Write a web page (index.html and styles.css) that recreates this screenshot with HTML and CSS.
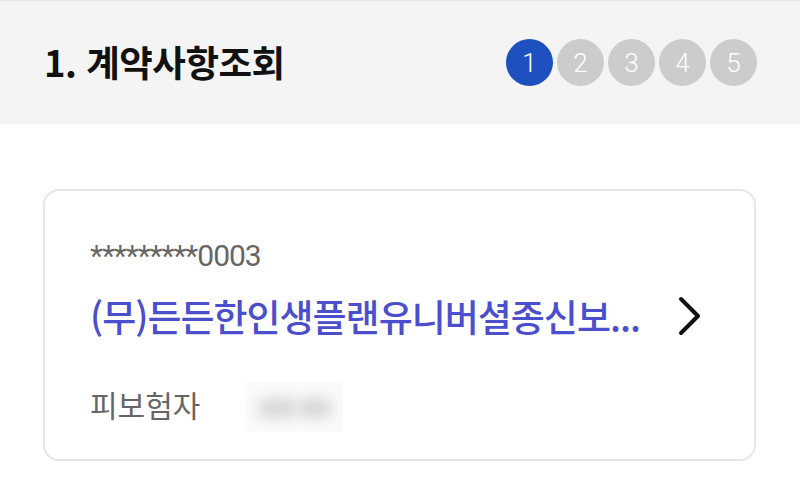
FILE: index.html
```html
<!DOCTYPE html>
<html lang="ko">
<head>
<meta charset="utf-8">
<link rel="stylesheet" href="styles.css">
</head>
<body>
<header class="header">
  <h1 class="title">1. 계약사항조회</h1>
  <ol class="steps">
    <li class="step active">1</li>
    <li class="step">2</li>
    <li class="step">3</li>
    <li class="step">4</li>
    <li class="step">5</li>
  </ol>
</header>
<main class="content">
  <div class="card">
    <div class="card-body">
      <div class="acct">*********0003</div>
      <div class="product-row">
        <div class="product">(무)든든한인생플랜유니버셜종신보...</div>
        <svg class="chev" width="26" height="42" viewBox="0 0 26 42"><path d="M4 4 L21 21 L4 38" fill="none" stroke="#111" stroke-width="4" stroke-linecap="round" stroke-linejoin="round"/></svg>
      </div>
      <div class="insured">
        <span class="label">피보험자</span>
        <span class="masked"><span class="blob b1"></span><span class="blob b2"></span></span>
      </div>
    </div>
  </div>
</main>
</body>
</html>
```
FILE: styles.css
```css
html, body { margin: 0; padding: 0; background: #fff; }
body { font-family: Roboto, "Noto Sans CJK KR", sans-serif; width: 800px; height: 486px; overflow: hidden; }
.header {
  box-sizing: border-box;
  height: 124px;
  background: #f4f4f4;
  border-top: 1px solid #e6e6e6;
  display: flex;
  align-items: center;
  justify-content: space-between;
  padding: 0 43px 0 44px;
}
.title {
  margin: 0;
  font-family: "Noto Sans CJK KR", sans-serif;
  font-weight: 700;
  font-size: 36.5px;
  letter-spacing: -0.5px;
  color: #111;
  line-height: 44px;
  margin-top: -2px;
}
.steps { list-style: none; margin: 0; padding: 0; display: flex; gap: 4px; }
.step {
  width: 47px; height: 47px; border-radius: 50%;
  background: #cccccc; color: #fff;
  display: flex; align-items: center; justify-content: center;
  font-family: Roboto, sans-serif; font-size: 26px; font-weight: 300;
}
.step.active { background: #1e50bf; }
.content { padding: 65px 44px 0 43px; }
.card {
  box-sizing: border-box;
  height: 272px;
  border: 2px solid #e6e6e6;
  border-radius: 16px;
}
.card-body { padding: 48px 51px 0 45px; display: flex; flex-direction: column; }
.acct { font-family: Roboto, sans-serif; font-size: 30px; color: #666; line-height: 34px; letter-spacing: -1px; }
.product-row { display: flex; align-items: center; justify-content: space-between; margin-top: 18px; }
.product { font-family: "Noto Sans CJK KR", sans-serif; font-size: 37px; font-weight: 500; color: #4b4fcc; line-height: 50px; letter-spacing: -1px; white-space: nowrap; }
.insured { display: flex; align-items: center; margin-top: 35px; }
.label { font-family: "Noto Sans CJK KR", sans-serif; font-size: 30px; color: #666; width: 155px; line-height: 50px; }
.masked { width: 98px; height: 50px; margin-top: 6px; background: #fbfbfb; position: relative; overflow: hidden; }
.blob { position: absolute; top: 16px; height: 20px; border-radius: 10px; background: #d6d6d6; filter: blur(7px); }
.b1 { left: 12px; width: 40px; }
.b2 { left: 52px; width: 36px; }
```
